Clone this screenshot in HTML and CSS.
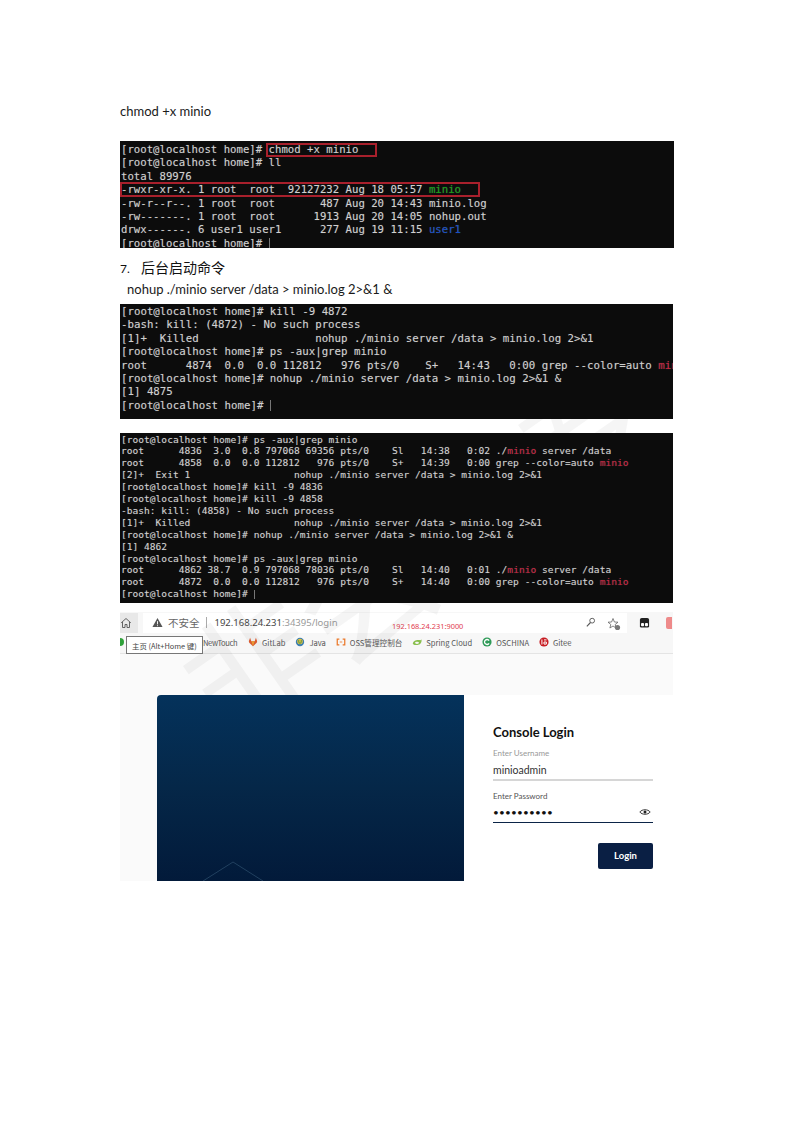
FILE: index.html
```html
<!DOCTYPE html>
<html lang="zh">
<head>
<meta charset="utf-8">
<title>minio</title>
<link rel="stylesheet" href="styles.css">
</head>
<body>
<main class="page">
  <p class="para first">chmod +x minio</p>
  <section class="term term-a">
<pre>[root@localhost home]# chmod +x minio
[root@localhost home]# ll
total 89976
-rwxr-xr-x. 1 root  root  92127232 Aug 18 05:57 <span class="green">minio</span>
-rw-r--r--. 1 root  root       487 Aug 20 14:43 minio.log
-rw-------. 1 root  root      1913 Aug 20 14:05 nohup.out
drwx------. 6 user1 user1      277 Aug 19 11:15 <span class="blue">user1</span>
[root@localhost home]# <span class="cursor"></span></pre>
    <div class="mark mark-cmd"></div>
    <div class="mark mark-row"></div>
  </section>
  <p class="heading"><span class="num">7.</span>后台启动命令</p>
  <p class="para sub">nohup ./minio server /data &gt; minio.log 2&gt;&amp;1 &amp;</p>
  <section class="term term-b">
<pre>[root@localhost home]# kill -9 4872
-bash: kill: (4872) - No such process
[1]+  Killed                  nohup ./minio server /data &gt; minio.log 2&gt;&amp;1
[root@localhost home]# ps -aux|grep minio
root      4874  0.0  0.0 112812   976 pts/0    S+   14:43   0:00 grep --color=auto <span class="red">minio</span>
[root@localhost home]# nohup ./minio server /data &gt; minio.log 2&gt;&amp;1 &amp;
[1] 4875
[root@localhost home]# <span class="cursor"></span></pre>
  </section>
  <section class="term term-c">
<pre>[root@localhost home]# ps -aux|grep minio
root      4836  3.0  0.8 797068 69356 pts/0    Sl   14:38   0:02 ./<span class="red">minio</span> server /data
root      4858  0.0  0.0 112812   976 pts/0    S+   14:39   0:00 grep --color=auto <span class="red">minio</span>
[2]+  Exit 1                  nohup ./minio server /data &gt; minio.log 2&gt;&amp;1
[root@localhost home]# kill -9 4836
[root@localhost home]# kill -9 4858
-bash: kill: (4858) - No such process
[1]+  Killed                  nohup ./minio server /data &gt; minio.log 2&gt;&amp;1
[root@localhost home]# nohup ./minio server /data &gt; minio.log 2&gt;&amp;1 &amp;
[1] 4862
[root@localhost home]# ps -aux|grep minio
root      4862 38.7  0.9 797068 78036 pts/0    Sl   14:40   0:01 ./<span class="red">minio</span> server /data
root      4872  0.0  0.0 112812   976 pts/0    S+   14:40   0:00 grep --color=auto <span class="red">minio</span>
[root@localhost home]# <span class="cursor"></span></pre>
  </section>
  <section class="browser">
    <div class="toolbar">
      <span class="home-btn">
        <svg class="ico home" viewBox="0 0 12 12"><path d="M1.200 5.800 6 1.500l4.800 4.300M2.500 5v5.500h2.500V7.500h2v3h2.500V5" fill="none" stroke="#555" stroke-width=".9"/></svg>
      </span>
      <div class="address">
        <svg class="ico warn" viewBox="0 0 12 12"><path d="M6 1 11.500 11H.5z" fill="#555"/><path d="M6 4.500v3.500M6 9v1" stroke="#fff" stroke-width="1"/></svg>
        <span class="insecure">不安全</span>
        <span class="sep"></span>
        <span class="url">192.168.24.231<span class="port">:34395/login</span></span>
        <span class="url-note">192.168.24.231:9000</span>
        <svg class="ico key" viewBox="0 0 12 12"><circle cx="7.800" cy="4" r="2.600" fill="none" stroke="#555"/><path d="M6 6 2 10.200" stroke="#555" stroke-width="1.200"/></svg>
        <svg class="ico star" viewBox="0 0 14 14"><path d="M6 1.500 7.400 5l3.600.2-2.800 2.300.9 3.500L6 9l-3.100 2 .9-3.500L1 5.200 4.600 5z" fill="none" stroke="#666" stroke-width=".8"/><circle cx="10.500" cy="10.500" r="2.600" fill="#777"/></svg>
      </div>
      <svg class="ico tabs" viewBox="0 0 12 12"><path d="M1 3a2 2 0 0 1 2-2h6a2 2 0 0 1 2 2v7a1.500 1.500 0 0 1-1.500 1.500h-7A1.500 1.500 0 0 1 1 10z" fill="#222"/><rect x="2.200" y="6.500" width="3.300" height="3.600" rx="1" fill="#fff"/><rect x="6.500" y="6.500" width="3.300" height="3.600" rx="1" fill="#fff"/></svg>
      <span class="ext"></span>
    </div>
    <div class="bookmarks">
      <span class="bm-dot"></span>
      <span class="bm nt">NewTouch</span>
      <span class="bm"><svg class="bi" viewBox="0 0 12 12"><path d="M1 5 2.500 1 4 5h4l1.500-4L11 5l-.5 2L6 11 1.500 7z" fill="#e2582a"/><path d="M4 5h4L6 11z" fill="#f0a030"/></svg>GitLab</span>
      <span class="bm"><svg class="bi" viewBox="0 0 12 12"><circle cx="6" cy="6" r="5" fill="#3a7fb0"/><circle cx="6" cy="5.500" r="3.300" fill="#e8c040"/><path d="M4.500 3.500v2.500a1.500 1.500 0 0 0 3 0V3.500" fill="none" stroke="#3c8f46"/></svg>Java</span>
      <span class="bm"><svg class="bi" viewBox="0 0 12 12"><path d="M4 2.500H1.500v7H4M8 2.500h2.500v7H8" fill="none" stroke="#ec7a2c" stroke-width="1.500"/><path d="M4.500 6h3" stroke="#ec7a2c"/></svg>OSS管理控制台</span>
      <span class="bm"><svg class="bi" viewBox="0 0 12 12"><path d="M1 8.500c0-4 5-5.500 9-4.500l1.500-1c.3 4.500-2 6.500-5 6.500H3z" fill="#8abf4e"/><ellipse cx="6" cy="7" rx="2.400" ry="1.300" fill="#f7f7f7"/></svg>Spring Cloud</span>
      <span class="bm"><svg class="bi" viewBox="0 0 12 12"><circle cx="6" cy="6" r="5.500" fill="#2f9a58"/><path d="M8.500 4.300A3 3 0 1 0 8.500 7.700" fill="none" stroke="#fff" stroke-width="1.600"/></svg>OSCHINA</span>
      <span class="bm"><svg class="bi" viewBox="0 0 12 12"><circle cx="6" cy="6" r="5.500" fill="#c71d23"/><path d="M3.500 3v6M6 3.500h3M8.800 6H6v2.500h2.800V6" fill="none" stroke="#fff" stroke-width="1.200"/></svg>Gitee</span>
      <span class="tip">主页 (Alt+Home 键)</span>
    </div>
    <div class="viewport">
      <div class="card">
        <div class="hero">
          <svg class="hero-lines" viewBox="0 0 306 20"><path d="M46 20 76 1l30 19" fill="none" stroke="#2a4a68" stroke-width=".8"/></svg>
        </div>
        <form class="login">
          <h2 class="login-title">Console Login</h2>
          <label class="lbl lbl-user">Enter Username</label>
          <div class="field field-user">minioadmin</div>
          <label class="lbl lbl-pass">Enter Password</label>
          <div class="field field-pass">
            <span class="dots">••••••••••</span>
            <svg class="eye" viewBox="0 0 12 8"><path d="M.8 4C3 1 9 1 11.200 4 9 7 3 7 .8 4z" fill="none" stroke="#222" stroke-width=".9"/><circle cx="6" cy="4" r="1.500" fill="#222"/></svg>
          </div>
          <div class="actions"><span class="login-btn">Login</span></div>
        </form>
      </div>
    </div>
  </section>
  <div class="watermark" aria-hidden="true">非会员专</div>
</main>
</body>
</html>
```

FILE: styles.css
```css
* { box-sizing: border-box; }
html, body { margin: 0; padding: 0; background: #fff; }
.page {
  position: relative;
  width: 793px;
  height: 1122px;
  padding: 103px 119px 0 120px;
  overflow: hidden;
  font-family: "Lato", "Noto Sans CJK SC", sans-serif;
  color: #111;
}
.para { margin: 0; font-size: 13px; line-height: 17px; color: #1a1a1a; }
.first { margin-bottom: 21px; }
.heading {
  display: flex;
  align-items: baseline;
  height: 20px;
  margin: 9px 0 0;
  font-family: "Noto Sans CJK SC", sans-serif;
  font-size: 14px;
  line-height: 20px;
}
.num { width: 21px; font-family: "Lato", sans-serif; font-size: 12px; }
.sub { margin: 3px 0 5px 7px; height: 19px; line-height: 19px; }
.term {
  position: relative;
  z-index: 2;
  overflow: hidden;
  background: #0c0c0c;
  color: #d0d0d0;
}
.term pre {
  margin: 0;
  font-family: "DejaVu Sans Mono", monospace;
  text-shadow: 0 0 1px rgba(210,210,210,.35);
}
.term-a { width: 554px; height: 107px; padding: 2px 0 0 1px; }
.term-a pre { font-size: 10.660px; line-height: 13.400px; }
.term-b { width: 553px; height: 115px; margin-bottom: 14px; padding: 1px 0 0 1px; }
.term-b pre { font-size: 10.750px; line-height: 13.400px; }
.term-c { width: 553px; height: 170px; margin-bottom: 9px; padding: .5px 0 0 1px; }
.term-c pre { font-size: 9.590px; line-height: 11.900px; }
.green { color: #12a012; }
.blue { color: #1450c8; }
.red { color: #c8203c; }
.cursor { display: inline-block; width: 1px; height: 1em; background: #777; vertical-align: -2px; }
.mark { position: absolute; border: 2px solid #a8202c; }
.mark-cmd { left: 146px; top: 2px; width: 111px; height: 14px; }
.mark-row { left: 0; top: 41px; width: 360px; height: 15px; }

.browser { width: 553px; height: 269px; background: #f7f7f7; }
.toolbar { display: flex; align-items: center; height: 21px; background: #f7f7f7; overflow: hidden; }
.home-btn { display: flex; align-items: center; width: 18px; height: 20px; margin-right: 5px; padding-left: 0; background: #e8e8e8; }
.ico { display: block; width: 11px; height: 11px; flex: none; }
.home { width: 12px; height: 12px; }
.address { display: flex; align-items: center; position: relative; width: 484px; height: 20px; padding-left: 9px; background: #fff; color: #666; }
.insecure { margin-left: 5px; font-family: "Noto Sans CJK SC", sans-serif; font-size: 10.500px; color: #666; }
.sep { width: 1px; height: 11px; margin: 0 8px 0 6px; background: #aaa; }
.url { font-family: "Noto Sans", sans-serif; font-size: 9.500px; color: #444; }
.port { color: #999; }
.url-note { position: absolute; left: 249px; top: 8px; font-family: "Noto Sans", sans-serif; font-size: 7.400px; color: #e2404f; }
.key { position: absolute; left: 442px; top: 4px; }
.star { position: absolute; left: 464px; top: 4px; width: 14px; height: 14px; }
.tabs { margin-left: 12px; }
.ext { width: 6px; height: 12px; margin-left: 16px; background: #ee8a8a; border-radius: 2px 0 0 2px; }

.bookmarks {
  position: relative;
  display: flex;
  align-items: center;
  height: 21px;
  padding-bottom: 2px;
  border-bottom: 1px solid #e4e4e4;
  font-family: "Noto Sans CJK SC", sans-serif;
  font-size: 7.600px;
  color: #555;
}
.bm-dot { width: 4px; height: 8px; margin-right: 79px; background: #2fa13a; border-radius: 0 4px 4px 0; }
.bm { display: flex; align-items: center; gap: 4px; margin-right: 10px; white-space: nowrap; }
.nt { margin-right: 11px; letter-spacing: -.4px; }
.bi { width: 10px; height: 10px; flex: none; }
.tip {
  position: absolute;
  left: 6px;
  top: 3px;
  display: flex;
  align-items: center;
  height: 18px;
  padding: 0 5px;
  background: #fff;
  border: 1px solid #777;
  font-size: 7.400px;
  color: #444;
  white-space: nowrap;
}
.viewport { height: 227px; padding: 41px 0 0 37px; background: #fafafa; }
.card { display: flex; height: 186px; background: #fff; }
.hero {
  position: relative;
  z-index: 2;
  width: 307px;
  border-radius: 4px 0 0 0;
  background: linear-gradient(180deg, #04325b 0%, #052748 50%, #021a3a 100%);
  overflow: hidden;
}
.hero-lines { position: absolute; left: 0; bottom: 0; width: 306px; height: 20px; }
.login { flex: 1; padding: 28px 20px 0 29px; font-family: "Lato", sans-serif; }
.login-title { margin: 0 0 7px; font-size: 13px; line-height: 18px; font-weight: 700; color: #111; }
.lbl { display: block; font-size: 8px; line-height: 10px; }
.lbl-user { color: #999; }
.lbl-pass { margin-top: 10px; color: #555; }
.field { display: flex; align-items: center; justify-content: space-between; font-size: 10.500px; color: #333; }
.field-user { height: 23px; padding-top: 3px; border-bottom: 2px solid #d6d6d6; }
.field-pass { height: 21.500px; padding: 2px 2px 0 0; border-bottom: 1.500px solid #0b2447; }
.dots { font-size: 10px; letter-spacing: .2px; color: #111; }
.eye { display: block; width: 12px; height: 8px; }
.actions { display: flex; justify-content: flex-end; margin-top: 20.500px; }
.login-btn { display: flex; align-items: center; justify-content: center; width: 55px; height: 25.500px; border-radius: 2px; background: #0a1f44; color: #fff; font-size: 9.500px; font-weight: 700; }

.watermark {
  position: absolute;
  z-index: 1;
  left: 145px;
  top: 478px;
  font-family: "Noto Sans CJK SC", sans-serif;
  font-size: 135px;
  line-height: 1;
  color: rgba(120,120,120,.07);
  white-space: nowrap;
  transform: rotate(-35deg);
  pointer-events: none;
}
```
